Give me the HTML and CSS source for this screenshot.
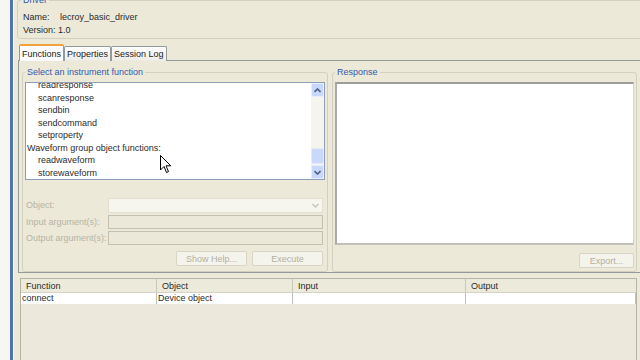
FILE: index.html
```html
<!DOCTYPE html>
<html lang="en">
<head>
  <meta charset="UTF-8" />
  <title>Instrument Control - lecroy_basic_driver</title>
  <link rel="stylesheet" href="styles.css">
</head>
<body>

<div class="window">
  <div class="edge"></div>

  <div class="main">
    <!-- Driver info -->
    <fieldset class="group driver">
      <legend>Driver</legend>
      <div class="info"><span class="key">Name:</span>lecroy_basic_driver</div>
      <div class="info">Version: 1.0</div>
    </fieldset>

    <div class="tabs">
      <div class="tab active">Functions</div>
      <div class="tab">Properties</div>
      <div class="tab">Session Log</div>
    </div>

    <div class="panel">
      <fieldset class="group functions">
        <legend>Select an instrument function</legend>

        <div class="listbox">
          <div class="list-items">
            <div class="item">readresponse</div>
            <div class="item">scanresponse</div>
            <div class="item">sendbin</div>
            <div class="item">sendcommand</div>
            <div class="item">setproperty</div>
            <div class="item heading">Waveform group object functions:</div>
            <div class="item">readwaveform</div>
            <div class="item">storewaveform</div>
          </div>
          <div class="scrollbar">
            <div class="sb-btn">
              <svg width="7" height="5" viewBox="0 0 7 5"><polyline points="0.5,4 3.5,1 6.5,4" fill="none" stroke="#4d6185" stroke-width="1.6"/></svg>
            </div>
            <div class="sb-track"><div class="sb-thumb"></div></div>
            <div class="sb-btn">
              <svg width="7" height="5" viewBox="0 0 7 5"><polyline points="0.5,1 3.5,4 6.5,1" fill="none" stroke="#4d6185" stroke-width="1.6"/></svg>
            </div>
          </div>
        </div>

        <div class="form">
          <label class="disabled">Object:</label>
          <div class="combo">
            <svg width="7" height="5" viewBox="0 0 7 5"><polyline points="0.5,1 3.5,4 6.5,1" fill="none" stroke="#c8c6bb" stroke-width="1.4"/></svg>
          </div>
          <label class="disabled">Input argument(s):</label>
          <div class="field"></div>
          <label class="disabled">Output argument(s):</label>
          <div class="field"></div>
        </div>

        <div class="buttons">
          <button disabled>Show Help...</button>
          <button disabled>Execute</button>
        </div>
      </fieldset>

      <fieldset class="group response">
        <legend>Response</legend>
        <div class="textarea"></div>
        <div class="buttons">
          <button class="export" disabled>Export...</button>
        </div>
      </fieldset>
    </div>

    <!-- Function call history -->
    <div class="table">
      <div class="row head">
        <div class="cell c1">Function</div>
        <div class="cell c2">Object</div>
        <div class="cell c3">Input</div>
        <div class="cell c4">Output</div>
      </div>
      <div class="row data">
        <div class="cell c1">connect</div>
        <div class="cell c2">Device object</div>
        <div class="cell c3"></div>
        <div class="cell c4"></div>
      </div>
    </div>
  </div>

  <!-- mouse pointer -->
  <svg class="cursor" width="12" height="19" viewBox="0 0 12 19">
    <path d="M0.5,0.5 L0.5,15 L4,11.5 L6.5,17.5 L8.5,16.6 L6,10.8 L10.8,10.8 Z" fill="#fff" stroke="#000" stroke-width="1"/>
  </svg>
</div>

</body>
</html>
```

FILE: styles.css
```css
* {
  box-sizing: border-box;
}
body {
  margin: 0;
  width: 640px;
  height: 360px;
  overflow: hidden;
  background: #ece9d9;
  font-family: 'Liberation Sans', Arial, sans-serif;
  font-size: 9px;
  color: #2b2b2b;
}
.window {
  position: relative;
  display: flex;
  height: 360px;
}
.edge {
  width: 13px;
  flex: none;
  background: #f6f6f3;
  border-right: 3px solid #5274b6;
}
.main {
  flex: 1;
  min-width: 0;
  display: flex;
  flex-direction: column;
  border-left: 1px solid #fbfaf4;
}

/* group boxes */
.group {
  margin: 0;
  border: 1px solid #d3d0c0;
  border-radius: 3px;
  min-width: 0;
}
.group legend {
  padding: 0 2px;
  line-height: 12px;
  color: #3557ab;
}

.driver {
  margin: -6px -4px 0 3px;
  padding: 5px 0 1px 5px;
}
.driver legend {
  margin-left: -2px;
}
.info {
  line-height: 13px;
}
.key {
  display: inline-block;
  width: 37px;
}

/* tabs */
.tabs {
  display: flex;
  align-items: flex-end;
  margin-top: 5px;
  padding-left: 5px;
  height: 17px;
  position: relative;
  z-index: 1;
  margin-bottom: -1px;
}
.tab {
  height: 15px;
  line-height: 14px;
  padding: 0 2px 0 2px;
  border: 1px solid #919b9c;
  border-bottom: none;
  border-radius: 2px 2px 0 0;
  background: linear-gradient(#ffffff, #ecebe5);
  color: #222;
}
.tab.active {
  height: 17px;
  line-height: 16px;
  background: #fcfcfe;
  border-top: 2px solid #f0a33c;
}

.panel {
  display: flex;
  gap: 4px;
  height: 213px;
  margin: 0 -3px 0 4px;
  padding: 5px 5px 0 3px;
  border: 1px solid #919b9c;
}
.functions {
  width: 306px;
  flex: none;
  padding: 4px 2px 2px;
}
.response {
  flex: 1;
  padding: 4px 2px 2px;
}

/* list box */
.listbox {
  display: flex;
  height: 98px;
  border: 1px solid #8f9fb6;
  background: #fff;
  overflow: hidden;
}
.list-items {
  flex: 1;
  margin-top: -4px;
}
.item {
  line-height: 12.57px;
  padding-left: 12px;
  white-space: nowrap;
}
.item.heading {
  padding-left: 1px;
}
.scrollbar {
  width: 13px;
  flex: none;
  display: flex;
  flex-direction: column;
  background: #f5f4ef;
}
.sb-btn {
  height: 14px;
  background: #c8d7fb;
  border: 1px solid #e6edfd;
  border-radius: 2px;
  display: flex;
  align-items: center;
  justify-content: center;
}
.sb-track {
  flex: 1;
  display: flex;
  flex-direction: column;
  justify-content: flex-end;
  padding-bottom: 1px;
}
.sb-thumb {
  height: 16px;
  background: #cad8fb;
  border: 1px solid #e3eafd;
  border-radius: 2px;
}

/* argument fields */
.form {
  display: grid;
  grid-template-columns: 82px 1fr;
  grid-template-rows: 15px 14px 14px;
  row-gap: 2px;
  margin: 18px 2px 0 1px;
}
.form label {
  line-height: 14px;
  white-space: nowrap;
}
.disabled {
  color: #b7b3a3;
}
.combo {
  background: #f6f5ee;
  border: 1px solid #e2dfd2;
  display: flex;
  align-items: center;
  justify-content: flex-end;
  padding-right: 3px;
}
.field {
  background: #ebe8d9;
  border: 1px solid #c4c1b2;
}

.buttons {
  display: flex;
  justify-content: flex-end;
  gap: 5px;
  margin-top: 6px;
  padding-right: 2px;
}
button {
  width: 71px;
  height: 15px;
  padding: 0;
  font-family: inherit;
  font-size: 9px;
  color: #b3af9f;
  background: #f5f4ec;
  border: 1px solid #d8d5c7;
  border-radius: 2px;
}
.response .buttons {
  margin-top: 8px;
  padding-right: 0;
}
button.export {
  width: 55px;
}

.textarea {
  height: 163px;
  background: #fff;
  border-top: 2px solid #9d9d9a;
  border-left: 2px solid #a9a9a6;
  border-right: 1px solid #d8d6cc;
  border-bottom: 2px solid #c3c1b7;
}

/* history table */
.table {
  margin: 5px 3px 0 6px;
  flex: 1;
  border: 1px solid #b6b4a6;
  border-bottom: none;
  background: #ede8dc;
}
.row {
  display: flex;
}
.cell {
  white-space: nowrap;
  overflow: hidden;
}
.c1 { width: 136px; }
.c2 { width: 136px; }
.c3 { width: 173px; }
.c4 { flex: 1; }
.head .cell {
  height: 14px;
  line-height: 14px;
  padding-left: 5px;
  background: #ebeadb;
  border-right: 1px solid #c9c7ba;
  border-bottom: 1px solid #d6d3c6;
}
.head .c4 {
  border-right: none;
}
.data .cell {
  height: 11px;
  line-height: 11px;
  padding-left: 1px;
  background: #fff;
  border-right: 1px solid #c0c0bc;
}

.cursor {
  position: absolute;
  left: 160px;
  top: 155px;
}
```
